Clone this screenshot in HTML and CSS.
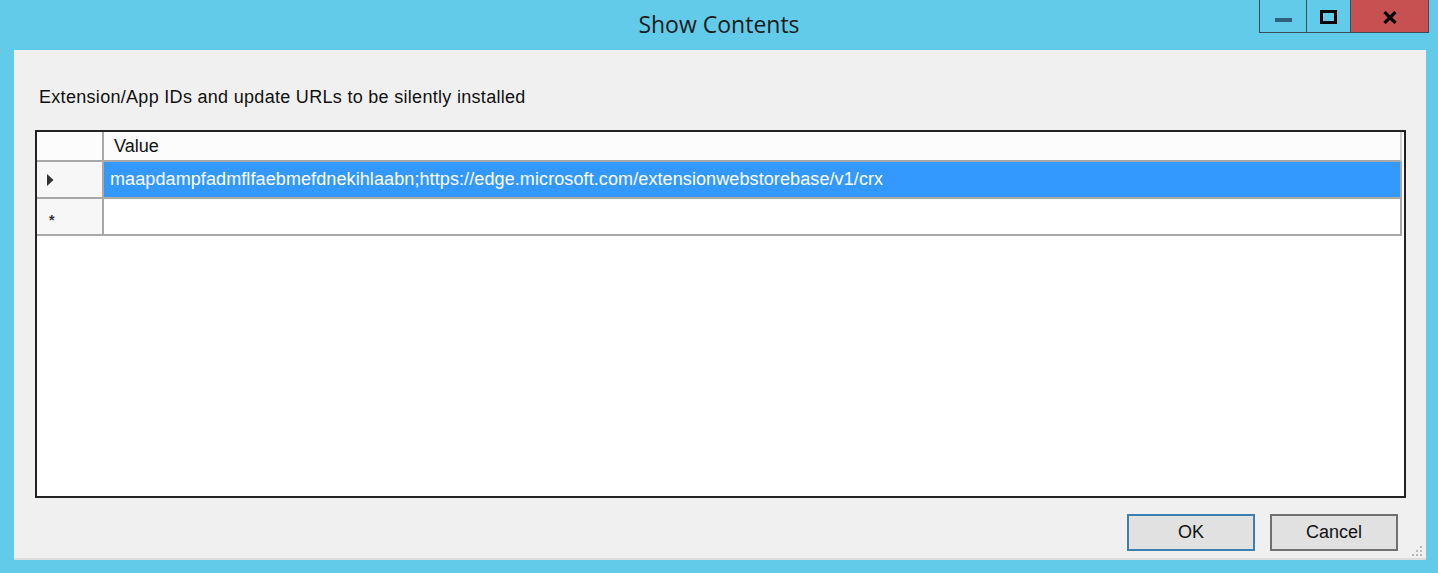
FILE: index.html
```html
<!DOCTYPE html>
<html>
<head>
<meta charset="utf-8">
<link rel="stylesheet" href="styles.css">
</head>
<body>
<div class="window">
  <div class="titlebar">
    <div></div>
    <div class="title">Show Contents</div>
    <div class="controls">
      <div class="ctl min"><span class="min-bar"></span></div>
      <div class="ctl max"><span class="max-box"></span></div>
      <div class="ctl close">
        <svg width="16" height="13" viewBox="0 0 16 13"><path d="M2.5 1 L13.5 12 M13.5 1 L2.5 12" stroke="#000" stroke-width="3.2" fill="none"/></svg>
      </div>
    </div>
  </div>
  <div class="client">
    <div class="label">Extension/App IDs and update URLs to be silently installed</div>
    <div class="grid">
      <div class="rh corner"></div>
      <div class="colhead">Value</div>
      <div class="rh"><svg width="8" height="14" viewBox="0 0 8 14"><path d="M1 1 L7.5 7 L1 13 Z" fill="#333"/></svg></div>
      <div class="cell selected">maapdampfadmflfaebmefdnekihlaabn;https://edge.microsoft.com/extensionwebstorebase/v1/crx</div>
      <div class="rh star">*</div>
      <div class="cell"></div>
    </div>
    <div class="buttons">
      <div class="btn default">OK</div>
      <div class="btn">Cancel</div>
    </div>
    <div class="grip">
      <svg width="12" height="12" viewBox="0 0 12 12" fill="#b8b8b8"><rect x="9" y="1" width="2" height="2"/><rect x="5" y="5" width="2" height="2"/><rect x="9" y="5" width="2" height="2"/><rect x="1" y="9" width="2" height="2"/><rect x="5" y="9" width="2" height="2"/><rect x="9" y="9" width="2" height="2"/></svg>
    </div>
  </div>
</div>
</body>
</html>
```
FILE: styles.css
```css
html, body {
  margin: 0;
  padding: 0;
}
body {
  width: 1438px;
  height: 573px;
  background: #63cbea;
  overflow: hidden;
  font-family: "Liberation Sans", Arial, sans-serif;
}
.window {
  display: flex;
  flex-direction: column;
  height: 573px;
}
.titlebar {
  height: 50px;
  display: grid;
  grid-template-columns: 1fr auto 1fr;
  align-items: start;
}
.title {
  font-family: "Open Sans", "Noto Sans", sans-serif;
  font-size: 23px;
  color: #1b1b1b;
  padding-top: 7px;
  line-height: 34px;
}
.controls {
  justify-self: end;
  display: flex;
  margin-right: 9px;
}
.ctl {
  height: 33px;
  box-sizing: border-box;
  border: 1px solid #3a4e5a;
  border-top: none;
  display: flex;
  align-items: center;
  justify-content: center;
}
.min {
  width: 48px;
}
.max {
  width: 44px;
  border-left: none;
}
.close {
  width: 78px;
  border-left: none;
  background: #c75050;
}
.min-bar {
  width: 17px;
  height: 4px;
  background: #2f627a;
  margin-top: 8px;
}
.max-box {
  width: 11px;
  height: 8px;
  border: 3px solid #000;
  margin-top: 2px;
}
.close svg {
  margin-top: 2px;
}
.client {
  margin: 0 12px 0 14px;
  height: 510px;
  background: #f0f0f0;
  border-bottom: 2px solid #dcdcdc;
  box-sizing: border-box;
  position: relative;
  padding: 36px 0 0 0;
}
.label {
  padding-left: 25px;
  font-size: 18px;
  letter-spacing: 0.3px;
  color: #111;
  line-height: 22px;
  height: 22px;
}
.grid {
  margin: 22px 0 0 21px;
  width: 1371px;
  height: 368px;
  box-sizing: border-box;
  border: 2px solid #222;
  background: #fff;
  display: grid;
  grid-template-columns: 67px 1298px;
  grid-template-rows: 30px 37px 37px;
  align-content: start;
}
.rh {
  background: #f7f7f7;
  border-right: 2px solid #a8a8a8;
  border-bottom: 2px solid #a8a8a8;
  display: flex;
  align-items: center;
  padding-left: 9px;
  box-sizing: border-box;
}
.corner {
  background: #fcfcfc;
}
.star {
  font-size: 14px;
  font-weight: bold;
  color: #333;
  padding-top: 6px;
  padding-left: 12px;
}
.colhead {
  background: #fcfcfc;
  border-bottom: 2px solid #a8a8a8;
  border-right: 2px solid #d0d0d0;
  font-size: 18px;
  color: #111;
  padding-left: 10px;
  line-height: 29px;
  box-sizing: border-box;
}
.cell {
  border-bottom: 2px solid #a8a8a8;
  border-right: 2px solid #a8a8a8;
  box-sizing: border-box;
  font-size: 18px;
  letter-spacing: 0.1px;
  line-height: 35px;
  padding-left: 6px;
  background: #fff;
}
.cell.selected {
  background: #3399ff;
  color: #fff;
}
.buttons {
  display: flex;
  justify-content: flex-end;
  gap: 15px;
  margin: 16px 28px 0 0;
}
.btn {
  width: 128px;
  height: 37px;
  box-sizing: border-box;
  border: 2px solid #707070;
  background: #e1e1e1;
  font-size: 18px;
  color: #111;
  display: flex;
  align-items: center;
  justify-content: center;
}
.btn.default {
  border-color: #3c7fb1;
}
.grip {
  position: absolute;
  right: 3px;
  bottom: 3px;
  width: 12px;
  height: 12px;
}
```
